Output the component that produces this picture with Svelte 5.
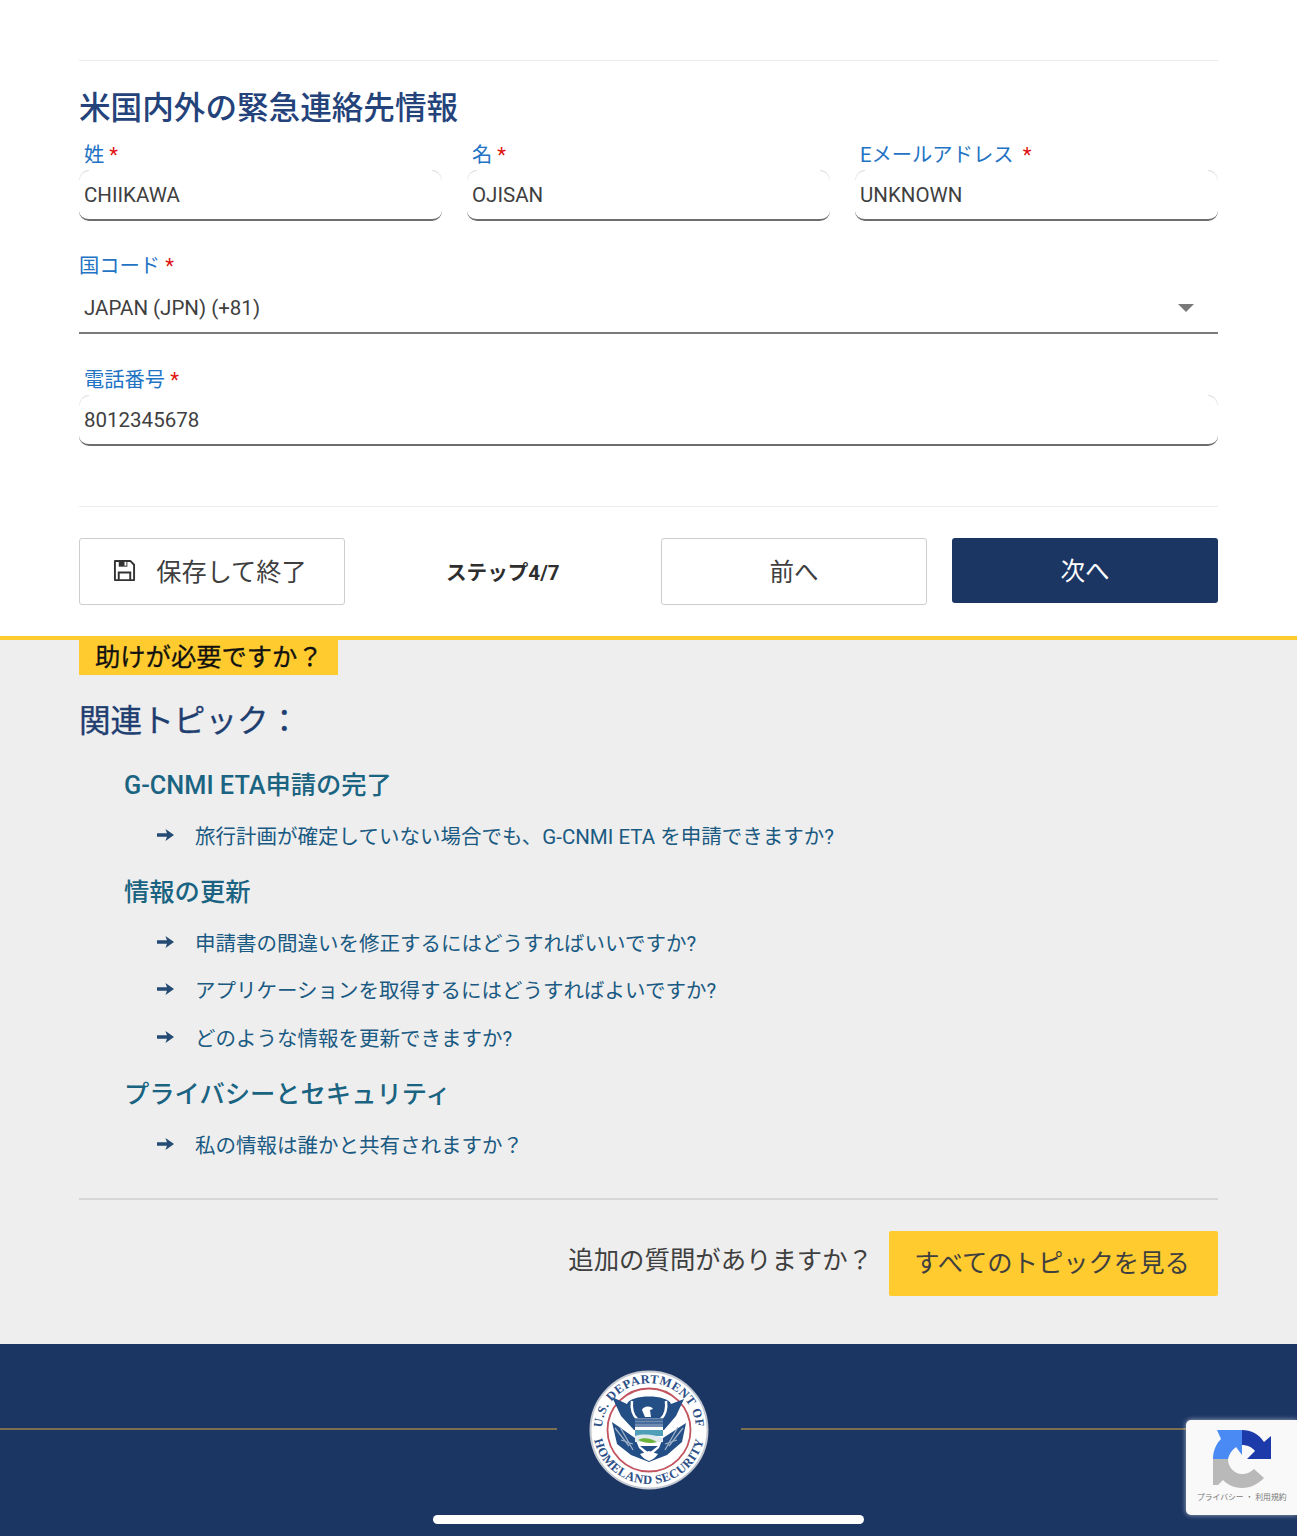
<script>
  const nameFields = [
    { label: '姓', value: 'CHIIKAWA' },
    { label: '名', value: 'OJISAN' },
    { label: 'Eメールアドレス\u2009', value: 'UNKNOWN' }
  ];

  const topics = [
    { title: 'G-CNMI ETA申請の完了', links: ['旅行計画が確定していない場合でも、G-CNMI ETA を申請できますか?'] },
    {
      title: '情報の更新',
      links: [
        '申請書の間違いを修正するにはどうすればいいですか?',
        'アプリケーションを取得するにはどうすればよいですか?',
        'どのような情報を更新できますか?'
      ]
    },
    { title: 'プライバシーとセキュリティ', links: ['私の情報は誰かと共有されますか？'] }
  ];
</script>

<div class="page">
  <section class="form">
    <hr class="rule first" />
    <h2>米国内外の緊急連絡先情報</h2>

    <div class="three">
      {#each nameFields as field}
        <div class="field">
          <div class="label inset">{field.label}<span class="req">*</span></div>
          <div class="input">{field.value}</div>
        </div>
      {/each}
    </div>

    <div class="field select-field">
      <div class="label">国コード<span class="req">*</span></div>
      <div class="select">
        <span>JAPAN (JPN) (+81)</span>
        <span class="caret"></span>
      </div>
    </div>

    <div class="field phone-field">
      <div class="label inset">電話番号<span class="req">*</span></div>
      <div class="input">8012345678</div>
    </div>

    <hr class="rule second" />

    <div class="actions">
      <button class="btn outline save">
        <svg width="23" height="23" viewBox="0 0 24 24" fill="none" stroke="#333" stroke-width="2">
          <path d="M2 2h16l4 4v16H2z" stroke-linejoin="round" />
          <path d="M6 22v-8h12v8" />
          <path d="M6 2h9v6H6z" fill="#333" stroke="none" />
          <path d="M12 3h2v4h-2z" fill="#fff" stroke="none" />
        </svg>
        保存して終了
      </button>
      <div class="step">ステップ4/7</div>
      <button class="btn outline prev">前へ</button>
      <button class="btn primary">次へ</button>
    </div>
  </section>

  <section class="help">
    <div class="tag">助けが必要ですか？</div>
    <h2 class="related">関連トピック：</h2>
    {#each topics as topic}
      <h3>{topic.title}</h3>
      <ul>
        {#each topic.links as link}
          <li>
            <svg class="arrow" width="18" height="14" viewBox="0 0 18 14">
              <path d="M1 7h13" stroke="#254a73" stroke-width="3.500" />
              <path d="M9.500 1 18 7l-8.500 6 2-6z" fill="#254a73" />
            </svg>
            <span>{link}</span>
          </li>
        {/each}
      </ul>
    {/each}
    <hr class="rule help-rule" />
    <div class="more">
      <span class="ask">追加の質問がありますか？</span>
      <button class="all">すべてのトピックを見る</button>
    </div>
  </section>

  <footer>
    <div class="line"></div>
    <svg class="seal" width="120" height="120" viewBox="0 0 120 120">
      <defs>
        <path id="top-arc" d="M14.500 72A47 47 0 1 1 105.500 72" />
        <path id="bottom-arc" d="M4 58A56 56 0 0 0 116 58" />
      </defs>
      <circle cx="60" cy="60" r="58.500" fill="#fff" stroke="#c4c8d0" stroke-width="2" />
      <circle cx="60" cy="60" r="41.500" fill="#fff" stroke="#c2545f" stroke-width="1.800" />
      <text class="seal-text"><textPath href="#top-arc" startOffset="50%" text-anchor="middle">U.S. DEPARTMENT OF</textPath></text>
      <text class="seal-text"><textPath href="#bottom-arc" startOffset="50%" text-anchor="middle">HOMELAND SECURITY</textPath></text>

      <!-- upper wings -->
      <path d="M23 27 38 34C41 24 79 24 82 34L95 29 87 46 75 60H45L32 46z" fill="#234f86" />
      <path d="M43 31c-1 8 1 14 5 18M77 31c1 8-1 14-5 18" stroke="#fff" stroke-width="2.500" fill="none" />
      <path d="M53 40c1-4 9-5 11-1l-3 1 1 7h-6z" fill="#fff" />

      <!-- lower branches -->
      <path d="M23 52 46 68 50 78 60 87 70 78 74 68 97 53 93 72 78 85 60 92 42 85 28 74z" fill="#234f86" />
      <path d="M26 58 40 76M31 57 44 80M94 58 80 76M89 57 76 80M32 70l12 4M88 70l-12 4" stroke="#9fb0c8" stroke-width="1.300" />

      <!-- shield -->
      <path d="M46 48h28v22l-14 9-14-9z" fill="#fff" />
      <path d="M46 48h28v9H46z" fill="#6f8bb1" />
      <path d="M46 50h28M46 53h28" stroke="#234f86" stroke-width="1" />
      <path d="M46 60h28v6H46z" fill="#4f9fb8" />
      <path d="M46 66c9-3 20-1 28 2v4H46z" fill="#dfe9ee" />
      <path d="M49 70c5-3 13-2 19 2-6 2-13 1-19-2z" fill="#6fb23c" />
      <path d="M51 76h18l-9 7z" fill="#234f86" />
      <path d="M51 84c3 4 6 6 9 7 3-1 6-3 9-7l-9-3z" fill="#fff" />
    </svg>
    <div class="line"></div>
  </footer>

  <div class="recaptcha">
    <svg width="58" height="58" viewBox="0 0 58 58">
      <path d="M0 29C0 21 3 14 8 9L4 0H29V25L23 17C19 20 16 24 15 29z" fill="#4a8af4" />
      <path d="M29 0C38 0 46 4 51 12L58 6V29H34L42 21C39 17 34 15 29 15z" fill="#1c3aa9" />
      <path d="M0 29H15C15 37 21 44 29 44 34 44 38 42 41 39L51 48C45 54 38 58 29 58 20 58 14 54 10 50L5 55H0z" fill="#b9b9b9" />
    </svg>
    <div class="legal">プライバシー ・ 利用規約</div>
  </div>
  <div class="home-bar"></div>
</div>

<style>
  :global(body) {
    margin: 0;
    background: #fff;
  }

  .page {
    position: relative;
    width: 1297px;
    height: 1536px;
    overflow: hidden;
    font-family: Roboto, 'Noto Sans CJK JP', sans-serif;
  }

  h2,
  h3,
  ul {
    margin: 0;
    padding: 0;
  }

  .form {
    box-sizing: border-box;
    height: 636px;
    padding: 60px 79px 0;
  }

  .rule {
    margin: 0;
    border: 0;
    height: 1px;
    background: #ececec;
  }

  h2 {
    margin-top: 25px;
    height: 46px;
    font-size: 31.600px;
    line-height: 46px;
    font-weight: 500;
    color: #24437a;
  }

  .three {
    display: grid;
    grid-template-columns: repeat(3, 363px);
    gap: 25px;
    margin-top: 8px;
  }

  .label {
    height: 30px;
    font-size: 20.300px;
    line-height: 30px;
    color: #2273c4;
  }

  .inset {
    padding-left: 5px;
  }

  .req {
    margin-left: 5px;
    color: #e01010;
  }

  .input {
    position: relative;
    box-sizing: border-box;
    height: 51px;
    padding: 0 5px;
    font-size: 20.500px;
    line-height: 50px;
    color: #3f3f3f;
    border-radius: 10px;
    border-bottom: 2px solid #6e6e6e;
  }

  /* only the top corners of the box are visible */
  .input::before,
  .input::after {
    content: '';
    position: absolute;
    top: 0;
    width: 9px;
    height: 9px;
    border-top: 1px solid #dcdcdc;
  }

  .input::before {
    left: 0;
    border-left: 1px solid #e8e8e8;
    border-top-left-radius: 10px;
  }

  .input::after {
    right: 0;
    border-right: 1px solid #e8e8e8;
    border-top-right-radius: 10px;
  }

  .select-field {
    margin-top: 30px;
  }

  .select {
    display: flex;
    justify-content: space-between;
    align-items: center;
    box-sizing: border-box;
    height: 53px;
    padding: 3px 24px 0 5px;
    font-size: 20.500px;
    color: #3f3f3f;
    border-bottom: 2px solid #7a7a7a;
  }

  .caret {
    border-left: 8px solid transparent;
    border-right: 8px solid transparent;
    border-top: 8px solid #7a7a7a;
  }

  .phone-field {
    margin-top: 31px;
  }

  .second {
    margin-top: 60px;
  }

  .actions {
    display: grid;
    grid-template-columns: 266px 316px 266px 266px;
    align-items: start;
    margin-top: 31px;
  }

  .btn {
    padding: 0 0 3px;
    font-family: inherit;
    font-size: 24.500px;
    font-weight: 400;
    border-radius: 3px;
  }

  .outline {
    height: 67px;
    background: #fff;
    border: 1.500px solid #cdcdcd;
    color: #3f3f3f;
  }

  .prev {
    width: 266px;
  }

  .save {
    display: flex;
    align-items: center;
    justify-content: center;
    gap: 20px;
    padding-right: 4px;
    font-size: 25.200px;
  }

  .step {
    padding: 20px 0 0 101px;
    font-size: 20.600px;
    line-height: 30px;
    font-weight: 700;
    color: #2e2e2e;
  }

  .primary {
    height: 65px;
    margin-left: 25px;
    width: 266px;
    background: #1c3664;
    color: #fff;
    border: 0;
  }

  .help {
    box-sizing: border-box;
    height: 708px;
    padding: 0 79px;
    background: #eeeeee;
    border-top: 4px solid #ffcb2f;
  }

  .tag {
    display: inline-block;
    box-sizing: border-box;
    width: 259px;
    height: 35px;
    padding-left: 16px;
    background: #ffcb2f;
    font-size: 25.300px;
    line-height: 35px;
    font-weight: 400;
    color: #111;
    -webkit-text-stroke: 0.3px #111;
  }

  .related {
    margin: 24px 0 21px;
    font-weight: 400;
    color: #1f3e70;
    -webkit-text-stroke: 0.3px #1f3e70;
  }

  h3 {
    margin: 14.800px 0 0 45px;
    height: 40px;
    font-size: 25.300px;
    line-height: 40px;
    font-weight: 500;
    color: #1a6482;
  }

  h3 + ul {
    margin-top: 4.800px;
  }

  li {
    display: flex;
    align-items: center;
    gap: 21px;
    height: 47.500px;
    padding-left: 77px;
    list-style: none;
    font-size: 20.500px;
    color: #1a5a82;
  }

  .help-rule {
    margin-top: 30.500px;
    height: 2px;
    background: #d6d6d6;
  }

  .more {
    display: flex;
    justify-content: flex-end;
    align-items: center;
    gap: 16px;
    margin-top: 31px;
    font-size: 25.400px;
    color: #3f3f3f;
  }

  .ask {
    margin-bottom: 10px;
  }

  .all {
    width: 329px;
    height: 65px;
    padding: 0 3px 4px 0;
    background: #ffcb2f;
    border: 0;
    border-radius: 2px;
    font-family: inherit;
    font-size: 25.300px;
    color: #3f3f3f;
  }

  footer {
    display: flex;
    align-items: flex-start;
    gap: 32px;
    height: 192px;
    box-sizing: border-box;
    padding-top: 26px;
    background: #1c3664;
  }

  .line {
    flex: 1;
    height: 2px;
    margin-top: 58px;
    background: #7b6f4f;
  }

  .seal {
    flex: none;
  }

  .seal-text {
    font-family: 'Liberation Serif', serif;
    font-size: 12.500px;
    font-weight: 700;
    letter-spacing: 0.5px;
    fill: #2c4f86;
  }

  .recaptcha {
    position: absolute;
    left: 1186px;
    top: 1420px;
    width: 111px;
    height: 95px;
    box-sizing: border-box;
    padding: 10px 0 0 27px;
    background: #f9f9f9;
    border-radius: 5px 0 0 5px;
    box-shadow: 0 0 5px rgba(255, 255, 255, 0.6);
  }

  .recaptcha svg {
    display: block;
  }

  .legal {
    margin: 3px 0 0 -16px;
    font-size: 7.800px;
    line-height: 14px;
    color: #777;
    white-space: nowrap;
  }

  .home-bar {
    position: absolute;
    left: 433px;
    top: 1515px;
    width: 431px;
    height: 9px;
    border-radius: 5px;
    background: #fff;
  }
</style>
